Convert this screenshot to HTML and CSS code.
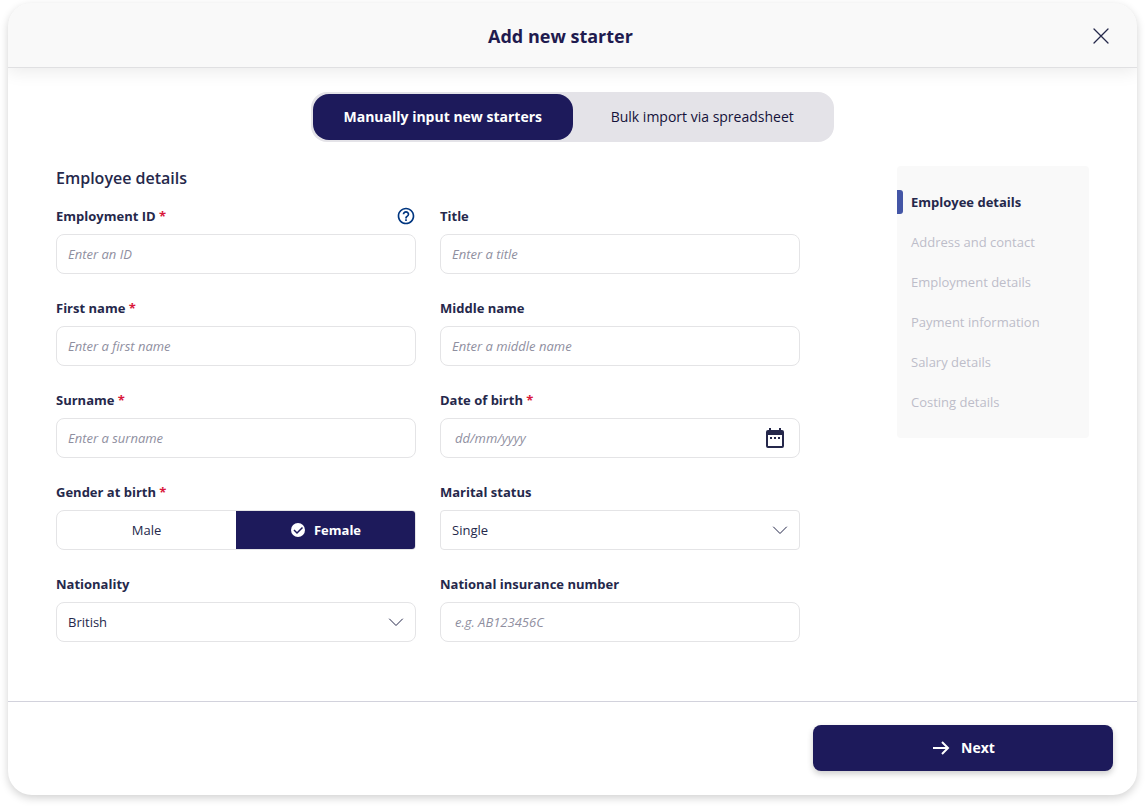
FILE: index.html
```html
<!DOCTYPE html>
<html lang="en">
<head>
    <meta charset="UTF-8">
    <meta name="viewport" content="width=device-width, initial-scale=1.0">
    <title>Add new starter</title>
    <link rel="stylesheet" href="styles.css">
</head>
<body>

    <main class="modal">
        <header class="modal-header">
            <h1>Add new starter</h1>
            <button type="button" class="icon-button" aria-label="Close">
                <svg width="24" height="24" viewBox="0 0 24 24"><path d="M5 5l14 14M19 5L5 19" fill="none" stroke="currentColor" stroke-width="1.3" stroke-linecap="round"/></svg>
            </button>
        </header>

        <div class="modal-body">
            <div class="tabs">
                <button type="button" class="tab active">Manually input new starters</button>
                <button type="button" class="tab">Bulk import via spreadsheet</button>
            </div>

            <div class="content">
                <form id="starterForm" class="starter-form">
                    <h2>Employee details</h2>

                    <div class="fields">
                        <div class="field">
                            <div class="label-row">
                                <label for="employmentId">Employment ID <span class="required">*</span></label>
                                <button type="button" class="icon-button help" aria-label="Help">
                                    <svg width="20" height="20" viewBox="0 0 24 24"><path fill="currentColor" d="M11 18h2v-2h-2v2zm1-16C6.48 2 2 6.48 2 12s4.48 10 10 10 10-4.48 10-10S17.52 2 12 2zm0 18c-4.41 0-8-3.59-8-8s3.59-8 8-8 8 3.59 8 8-3.59 8-8 8zm0-14c-2.21 0-4 1.79-4 4h2c0-1.1.9-2 2-2s2 .9 2 2c0 2-3 1.75-3 5h2c0-2.25 3-2.5 3-5 0-2.21-1.79-4-4-4z"/></svg>
                                </button>
                            </div>
                            <input type="text" id="employmentId" class="control" placeholder="Enter an ID">
                        </div>

                        <div class="field">
                            <label for="title">Title</label>
                            <input type="text" id="title" class="control" placeholder="Enter a title">
                        </div>

                        <div class="field">
                            <label for="firstName">First name <span class="required">*</span></label>
                            <input type="text" id="firstName" class="control" placeholder="Enter a first name">
                        </div>

                        <div class="field">
                            <label for="middleName">Middle name</label>
                            <input type="text" id="middleName" class="control" placeholder="Enter a middle name">
                        </div>

                        <div class="field">
                            <label for="surname">Surname <span class="required">*</span></label>
                            <input type="text" id="surname" class="control" placeholder="Enter a surname">
                        </div>

                        <div class="field">
                            <label for="dob">Date of birth <span class="required">*</span></label>
                            <div class="control date-control">
                                <input type="text" id="dob" placeholder="dd/mm/yyyy">
                                <button type="button" class="icon-button" aria-label="Choose date">
                                    <svg width="24" height="24" viewBox="0 0 24 24"><path fill="currentColor" fill-rule="evenodd" d="M6 2h2v2h8V2h2v2h1a2 2 0 0 1 2 2v14a2 2 0 0 1-2 2H5a2 2 0 0 1-2-2V6a2 2 0 0 1 2-2h1zM5 9v11h14V9zM7 11h2v2H7zM11 11h2v2h-2zM15 11h2v2h-2z"/></svg>
                                </button>
                            </div>
                        </div>

                        <div class="field" role="radiogroup" aria-labelledby="genderLabel">
                            <span class="label" id="genderLabel">Gender at birth <span class="required">*</span></span>
                            <div class="control toggle">
                                <input type="radio" name="gender" id="male" value="male">
                                <label for="male">Male</label>
                                <input type="radio" name="gender" id="female" value="female" checked>
                                <label for="female">
                                    <svg width="16" height="16" viewBox="0 0 16 16"><circle cx="8" cy="8" r="7" fill="#fff"/><path d="M4 8l3 3 5.5-5.5" fill="none" stroke="#1d1a5b" stroke-width="1.5"/></svg>
                                    Female
                                </label>
                            </div>
                        </div>

                        <div class="field">
                            <label for="marital">Marital status</label>
                            <div class="select-wrap">
                                <select id="marital" class="control square">
                                    <option>Single</option>
                                    <option>Married</option>
                                </select>
                                <svg class="chevron" width="16" height="16" viewBox="0 0 16 16"><path d="M1.5 5L8 11.500 14.500 5" fill="none" stroke="currentColor" stroke-linecap="round" stroke-linejoin="round"/></svg>
                            </div>
                        </div>

                        <div class="field">
                            <label for="nationality">Nationality</label>
                            <div class="select-wrap">
                                <select id="nationality" class="control">
                                    <option>British</option>
                                    <option>Irish</option>
                                </select>
                                <svg class="chevron" width="16" height="16" viewBox="0 0 16 16"><path d="M1.5 5L8 11.500 14.500 5" fill="none" stroke="currentColor" stroke-linecap="round" stroke-linejoin="round"/></svg>
                            </div>
                        </div>

                        <div class="field">
                            <label for="niNumber">National insurance number</label>
                            <input type="text" id="niNumber" class="control indent" placeholder="e.g. AB123456C">
                        </div>
                    </div>
                </form>

                <nav class="steps">
                    <a href="#employee" class="current">Employee details</a>
                    <a href="#address">Address and contact</a>
                    <a href="#employment">Employment details</a>
                    <a href="#payment">Payment information</a>
                    <a href="#salary">Salary details</a>
                    <a href="#costing">Costing details</a>
                </nav>
            </div>
        </div>

        <footer class="modal-footer">
            <button type="submit" form="starterForm" class="next">
                <svg width="20" height="20" viewBox="0 0 20 20"><path d="M2 10h15M11 4l6 6-6 6" fill="none" stroke="currentColor" stroke-width="2"/></svg>
                Next
            </button>
        </footer>
    </main>

</body>
</html>
```
FILE: styles.css
```css
* {
    box-sizing: border-box;
}
body {
    margin: 0;
    background: #fff;
    color: #25284b;
    font-family: "Open Sans", "Noto Sans", sans-serif;
    font-size: 13px;
    line-height: 24px;
}
h1, h2 {
    margin: 0;
}
button, input, select {
    font: inherit;
    color: inherit;
}
button {
    cursor: pointer;
}
svg {
    display: block;
    flex: none;
}
.modal {
    display: flex;
    flex-direction: column;
    min-height: calc(100vh - 15px);
    margin: 3px 8px 12px;
    border-radius: 24px;
    overflow: hidden;
    background: #fff;
    box-shadow: 0 3px 8px rgba(0, 0, 0, 0.18);
}
.modal-header {
    display: flex;
    align-items: center;
    height: 65px;
    padding: 2px 24px 0;
    background: #f9f9f9;
    border-bottom: 1px solid #e0e0e2;
    box-shadow: 0 4px 16px rgba(0, 0, 0, 0.08);
}
.modal-header h1 {
    flex: 1;
    text-align: center;
    color: #1f1b4f;
    font-size: 18px;
    font-weight: 700;
}
.icon-button {
    padding: 0;
    border: none;
    background: none;
}
.modal-body {
    flex: 1;
    padding: 24px 48px;
}

/* Tabs */
.tabs {
    display: grid;
    grid-template-columns: 1fr 1fr;
    max-width: 523px;
    margin: 0 auto 24px;
    padding: 2px;
    border-radius: 16px;
    background: #e4e3e8;
}
.tab {
    height: 46px;
    border: none;
    border-radius: 16px;
    background: none;
    color: #14123a;
    font-size: 14px;
}
.tab.active {
    background: #1d1a5b;
    color: #fff;
    font-weight: 700;
}

/* Form */
.content {
    display: flex;
    justify-content: space-between;
    align-items: flex-start;
    gap: 24px;
}
.starter-form {
    flex: 1;
    max-width: 744px;
}
.starter-form h2 {
    margin-bottom: 14px;
    font-size: 16px;
    font-weight: 600;
}
.fields {
    display: grid;
    grid-template-columns: 1fr 1fr;
    gap: 22px 24px;
}
.field {
    display: flex;
    flex-direction: column;
    gap: 6px;
}
.field label, .label {
    font-weight: 700;
}
.required {
    color: #d9183b;
}
.label-row {
    display: flex;
    align-items: center;
    justify-content: space-between;
}
.help {
    color: #003680;
}
.control {
    width: 100%;
    height: 40px;
    padding: 0 11px;
    border: 1px solid #e4e4e6;
    border-radius: 8px;
    background: #fff;
}
.control.square {
    border-radius: 4px;
}
.control.indent {
    padding: 0 14px;
}
input::placeholder {
    color: #8f8f9f;
    font-style: italic;
    opacity: 1;
}
.date-control {
    display: flex;
    align-items: center;
    padding: 0 12px 0 14px;
}
.date-control input {
    flex: 1;
    min-width: 0;
    padding: 0;
    border: none;
}
.select-wrap {
    position: relative;
}
.select-wrap select {
    display: block;
    appearance: none;
}
.chevron {
    position: absolute;
    top: 12px;
    right: 12px;
    pointer-events: none;
}
.toggle {
    position: relative;
    display: grid;
    grid-template-columns: 1fr 1fr;
    padding: 0;
    border-radius: 8px 4px 4px 8px;
    overflow: hidden;
}
.toggle input {
    position: absolute;
    opacity: 0;
}
.toggle label {
    display: flex;
    align-items: center;
    justify-content: center;
    gap: 8px;
    font-weight: 400;
    cursor: pointer;
}
.toggle input:checked + label {
    background: #1d1a5b;
    color: #fff;
    font-weight: 700;
}

/* Steps */
.steps {
    display: flex;
    flex-direction: column;
    gap: 16px;
    width: 192px;
    padding: 24px 0;
    border-radius: 4px;
    background: #f9f9f9;
}
.steps a {
    padding-left: 14px;
    color: #bdbdc9;
    text-decoration: none;
}
.steps .current {
    position: relative;
    color: #25284b;
    font-weight: 700;
}
.steps .current::before {
    content: "";
    position: absolute;
    top: 0;
    left: 0;
    width: 6px;
    height: 24px;
    border-radius: 0 3px 3px 0;
    background: #4456a6;
}

/* Footer */
.modal-footer {
    display: flex;
    justify-content: flex-end;
    padding: 23px 24px 24px;
    border-top: 1px solid #d2d2dc;
}
.next {
    display: flex;
    align-items: center;
    justify-content: center;
    gap: 10px;
    width: 300px;
    height: 46px;
    border: none;
    border-radius: 8px;
    background: #1d1a5b;
    color: #fff;
    font-size: 14px;
    font-weight: 700;
    box-shadow: 0 3px 6px rgba(0, 0, 0, 0.2);
}
```
